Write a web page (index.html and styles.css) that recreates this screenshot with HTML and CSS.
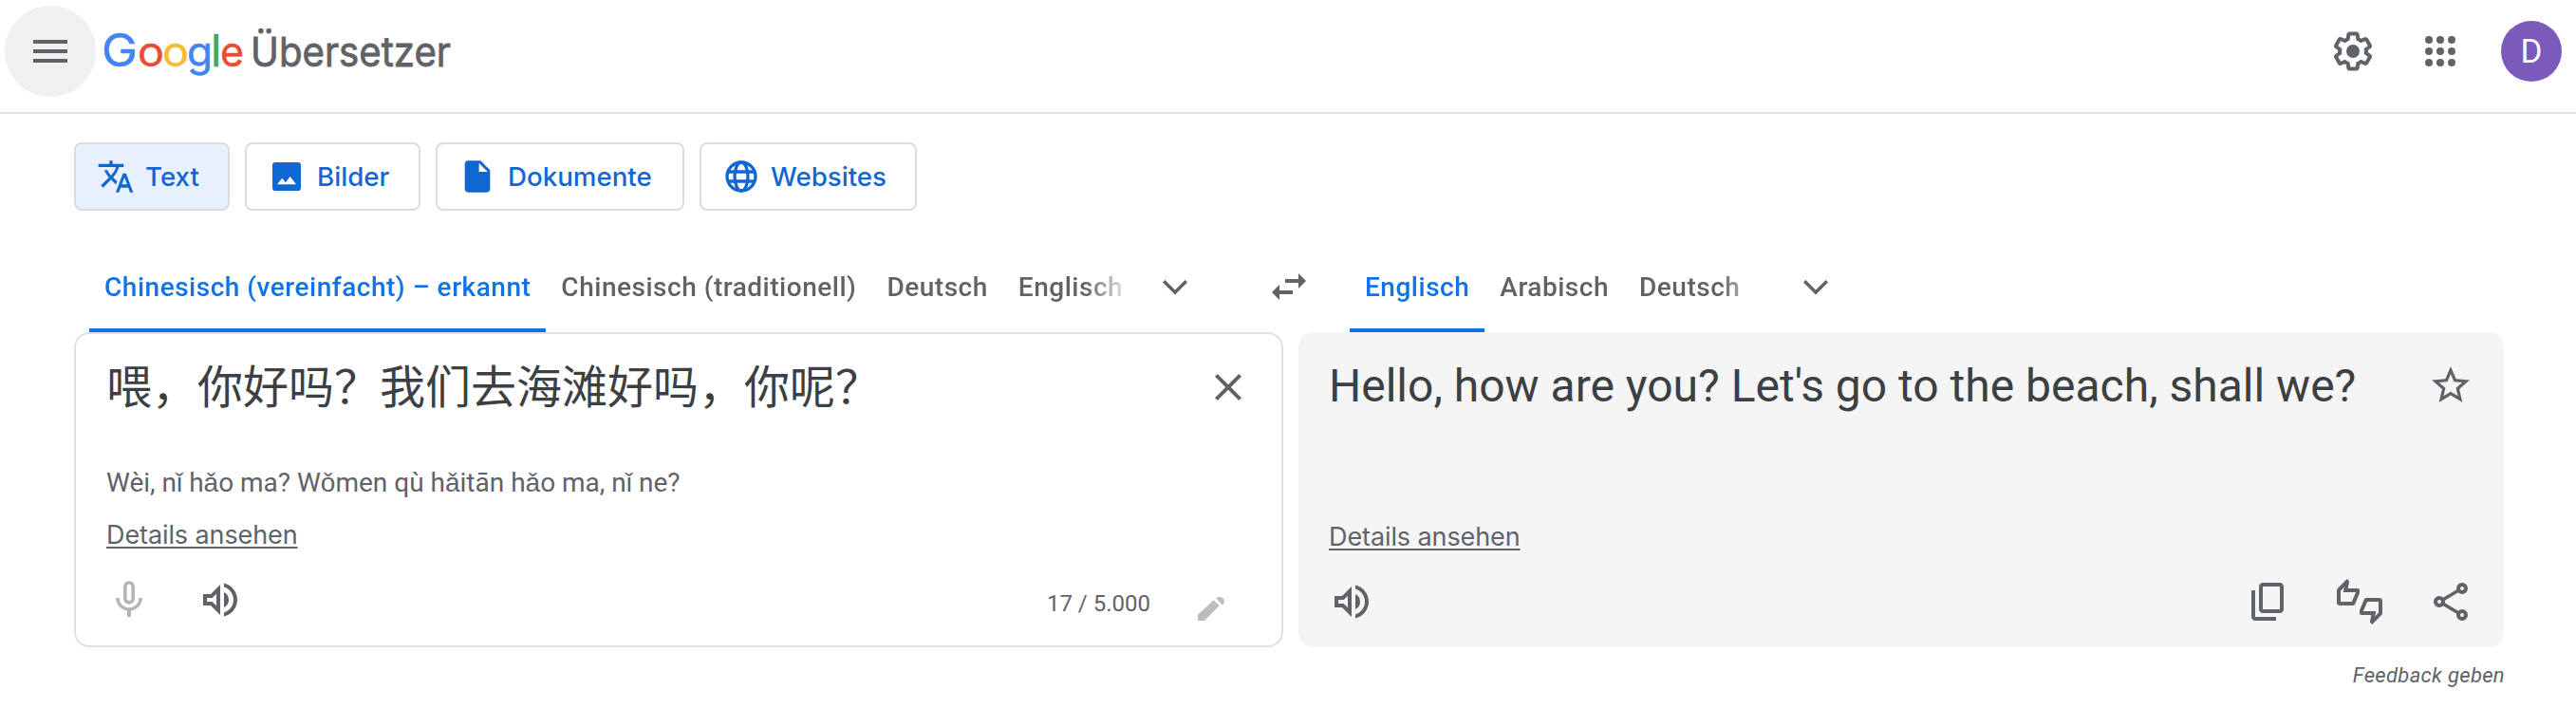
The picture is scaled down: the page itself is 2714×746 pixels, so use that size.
FILE: index.html
```
<!DOCTYPE html>
<html lang="de">
<head>
<meta charset="utf-8">
<title>Google Übersetzer</title>
<link rel="stylesheet" href="styles.css">
</head>
<body>
<header class="header">
  <button class="menu-button" aria-label="Hauptmenü">
    <svg class="icon" viewBox="0 0 24 24"><path d="M3 18h18v-2H3v2zm0-5h18v-2H3v2zm0-7v2h18V6H3z"/></svg>
  </button>
  <svg class="logo" width="380" height="84" viewBox="0 0 380 84">
    <g class="logo-google">
      <text x="1" y="64" font-size="48" textLength="38" lengthAdjust="spacingAndGlyphs" class="g-blue">G</text>
      <text x="39" y="64" textLength="28" lengthAdjust="spacingAndGlyphs" class="g-red">o</text>
      <text x="65" y="64" textLength="28" lengthAdjust="spacingAndGlyphs" class="g-yellow">o</text>
      <text x="91" y="64" textLength="27" lengthAdjust="spacingAndGlyphs" class="g-blue">g</text>
      <text x="116" y="64" font-size="47" class="g-green">l</text>
      <text x="126" y="64" textLength="25" lengthAdjust="spacingAndGlyphs" class="g-red">e</text>
    </g>
    <text x="158" y="64" class="logo-product" textLength="211" lengthAdjust="spacingAndGlyphs">Übersetzer</text>
  </svg>
  <div class="header-actions">
    <svg class="icon" viewBox="0 0 24 24"><path d="M13.85 22.25h-3.7c-.74 0-1.36-.54-1.45-1.27l-.27-1.89c-.27-.14-.53-.29-.79-.46l-1.8.72c-.7.26-1.47-.03-1.81-.65L2.2 15.53c-.35-.66-.2-1.44.36-1.88l1.53-1.19c-.01-.15-.02-.3-.02-.46 0-.15.01-.31.02-.46l-1.52-1.19c-.59-.45-.74-1.26-.37-1.88l1.85-3.19c.34-.62 1.11-.9 1.79-.63l1.81.73c.26-.17.52-.32.78-.46l.27-1.91c.09-.7.71-1.25 1.44-1.25h3.7c.74 0 1.36.54 1.45 1.27l.27 1.89c.27.14.53.29.79.46l1.8-.72c.71-.26 1.48.03 1.82.65l1.84 3.18c.36.66.2 1.44-.36 1.88l-1.52 1.19c.01.15.02.3.02.46s-.01.31-.02.46l1.52 1.19c.56.45.72 1.23.37 1.86l-1.86 3.22c-.34.62-1.11.9-1.8.63l-1.8-.72c-.26.17-.52.32-.78.46l-.27 1.91c-.1.68-.72 1.22-1.46 1.22zm-3.23-2h2.76l.37-2.55.53-.22c.44-.18.88-.44 1.34-.78l.45-.34 2.38.96 1.38-2.4-2.03-1.58.07-.56c.03-.26.06-.51.06-.78s-.03-.53-.06-.78l-.07-.56 2.03-1.58-1.39-2.4-2.39.96-.45-.35c-.42-.32-.87-.58-1.33-.77l-.52-.22-.37-2.55h-2.76l-.37 2.55-.53.21c-.44.19-.88.44-1.34.79l-.45.33-2.38-.95-1.39 2.39 2.03 1.58-.07.56a7 7 0 0 0-.06.79c0 .26.02.53.06.78l.07.56-2.03 1.58 1.38 2.4 2.39-.96.45.35c.43.33.86.58 1.33.77l.53.22.38 2.55z"/><circle cx="12" cy="12" r="3.5"/></svg>
    <svg class="icon" viewBox="0 0 24 24"><circle cx="6" cy="6" r="2"/><circle cx="12" cy="6" r="2"/><circle cx="18" cy="6" r="2"/><circle cx="6" cy="12" r="2"/><circle cx="12" cy="12" r="2"/><circle cx="18" cy="12" r="2"/><circle cx="6" cy="18" r="2"/><circle cx="12" cy="18" r="2"/><circle cx="18" cy="18" r="2"/></svg>
    <span class="avatar">D</span>
  </div>
</header>

<main class="main">
  <nav class="modes">
    <button class="mode mode-text mode-active">
      <svg class="mode-icon" viewBox="0 0 24 24"><path d="M12.87 15.07l-2.54-2.51.03-.03A17.52 17.52 0 0014.07 6H17V4h-7V2H8v2H1v1.99h11.17C11.5 7.92 10.44 9.75 9 11.35 8.07 10.32 7.3 9.19 6.69 8h-2c.73 1.63 1.73 3.17 2.98 4.56l-5.09 5.02L4 19l5-5 3.11 3.11.76-2.04zM18.5 10h-2L12 22h2l1.12-3h4.75L21 22h2l-4.5-12zm-2.62 7l1.62-4.33L19.12 17h-3.24z"/></svg>
      <span>Text</span>
    </button>
    <button class="mode mode-images">
      <svg class="mode-icon" viewBox="0 0 24 24"><path fill-rule="evenodd" d="M5 3h14a2 2 0 0 1 2 2v14a2 2 0 0 1-2 2H5a2 2 0 0 1-2-2V5a2 2 0 0 1 2-2zM6 17h12l-3.8-5-2.9 3.7L9.2 13z"/></svg>
      <span>Bilder</span>
    </button>
    <button class="mode mode-documents">
      <svg class="mode-icon" viewBox="0 0 24 24"><path d="M6 2c-1.1 0-1.99.9-1.99 2L4 20c0 1.1.89 2 1.99 2H18c1.1 0 2-.9 2-2V8l-6-6H6zm7 7V3.5L18.5 9H13z"/></svg>
      <span>Dokumente</span>
    </button>
    <button class="mode mode-websites">
      <svg class="mode-icon line-icon" viewBox="0 0 24 24" stroke-width="2"><circle cx="12" cy="12" r="9"/><ellipse cx="12" cy="12" rx="4.2" ry="9"/><path d="M3.5 9h17M3.5 15h17"/></svg>
      <span>Websites</span>
    </button>
  </nav>

  <div class="languages">
    <div class="lang-list lang-source">
      <button class="lang lang-active">Chinesisch (vereinfacht) – erkannt</button>
      <button class="lang">Chinesisch (traditionell)</button>
      <button class="lang">Deutsch</button>
      <button class="lang">Englisch</button>
    </div>
    <svg class="icon line-icon more-source" viewBox="0 0 24 24" stroke-width="1.7"><path d="M6.1 9.1l5.9 5.9 5.9-5.9"/></svg>
    <svg class="icon swap" viewBox="0 0 24 24"><path d="M6.99 11L3 15l3.99 4v-3H14v-2H6.99v-3zM21 9l-3.99-4v3H10v2h7.01v3L21 9z"/></svg>
    <div class="lang-list lang-target">
      <button class="lang lang-active">Englisch</button>
      <button class="lang">Arabisch</button>
      <button class="lang">Deutsch</button>
    </div>
    <svg class="icon line-icon more-target" viewBox="0 0 24 24" stroke-width="1.7"><path d="M6.1 9.1l5.9 5.9 5.9-5.9"/></svg>
  </div>

  <div class="panels">
    <section class="panel panel-source">
      <div class="panel-top">
        <p class="source-text" lang="zh-CN">喂，你好吗？我们去海滩好吗，你呢？</p>
        <svg class="icon clear" viewBox="0 0 24 24"><path d="M19 6.41L17.59 5 12 10.59 6.41 5 5 6.41 10.59 12 5 17.59 6.41 19 12 13.41 17.59 19 19 17.59 13.41 12z"/></svg>
      </div>
      <p class="translit">Wèi, nǐ hǎo ma? Wǒmen qù hǎitān hǎo ma, nǐ ne?</p>
      <a class="details">Details ansehen</a>
      <div class="toolbar">
        <svg class="icon mic" viewBox="0 0 24 24"><path d="M12 14.2c1.77 0 3-1.3 3-3V5.1a3 3 0 0 0-6 0v6.1c0 1.7 1.23 3 3 3zm-1.2-9.2c0-.66.54-1.2 1.2-1.2s1.2.54 1.2 1.2v6.2c0 .66-.54 1.2-1.2 1.2s-1.2-.54-1.2-1.2zM17.2 11c0 3-2.4 5.1-5.2 5.1S6.8 14 6.8 11H5c0 3.41 2.72 6.23 6 6.72V21h2v-3.28c3.28-.48 6-3.3 6-6.72z"/></svg>
        <svg class="icon" viewBox="0 0 24 24"><path d="M3 9v6h4l5 5V4L7 9H3zm7-.17v6.34L7.83 13H5v-2h2.83L10 8.83zM16.5 12A4.5 4.5 0 0014 7.97v8.05A4.48 4.48 0 0016.5 12zM14 3.23v2.06c2.89.86 5 3.54 5 6.71s-2.11 5.85-5 6.71v2.06c4.01-.91 7-4.49 7-8.77s-2.99-7.86-7-8.77z"/></svg>
        <span class="counter">17 / 5.000</span>
        <svg class="pencil" viewBox="0 0 32 32"><path d="M2 28v-6.2L18.7 6.3l6 6L9 28zM21.3 4.3c2-1.9 4.8-1.9 6.9 0 2 1.9 2.3 4.1.8 6.2-.6.9-1.5.9-2.3.2z"/></svg>
      </div>
    </section>
    <section class="panel panel-target">
      <div class="panel-top">
        <p class="target-text" lang="en">Hello, how are you? Let's go to the beach, shall we?</p>
        <svg class="icon star" viewBox="0 0 24 24"><path d="M22 9.24l-7.19-.62L12 2 9.19 8.63 2 9.24l5.46 4.73L5.82 21 12 17.27 18.18 21l-1.63-7.03L22 9.24zM12 15.4l-3.76 2.27 1-4.28-3.32-2.88 4.38-.38L12 6.1l1.71 4.04 4.38.38-3.32 2.88 1 4.28L12 15.4z"/></svg>
      </div>
      <a class="details">Details ansehen</a>
      <div class="toolbar">
        <svg class="icon listen" viewBox="0 0 24 24"><path d="M3 9v6h4l5 5V4L7 9H3zm7-.17v6.34L7.83 13H5v-2h2.83L10 8.83zM16.5 12A4.5 4.5 0 0014 7.97v8.05A4.48 4.48 0 0016.5 12zM14 3.23v2.06c2.89.86 5 3.54 5 6.71s-2.11 5.85-5 6.71v2.06c4.01-.91 7-4.49 7-8.77s-2.99-7.86-7-8.77z"/></svg>
        <svg class="icon" viewBox="0 0 24 24"><path d="M18 2H9C7.9 2 7 2.9 7 4v12c0 1.1.9 2 2 2h9c1.1 0 2-.9 2-2V4c0-1.1-.9-2-2-2zm0 14H9V4h9v12zM3 6v14c0 1.1.9 2 2 2h11v-2H5V6H3z"/></svg>
        <svg class="icon" viewBox="0 0 24 24"><path d="M12 6c0-.55-.45-1-1-1H5.82l.66-3.18.02-.23c0-.31-.13-.59-.33-.8L5.38 0 .44 4.94C.17 5.21 0 5.59 0 6v6.5c0 .83.67 1.5 1.5 1.5h6.75c.62 0 1.15-.38 1.38-.91l2.26-5.29c.07-.17.11-.36.11-.55V6zm-2 1.13L7.92 12H2V6.21l1.93-1.93L3.36 7H10v.13zM22.5 10h-6.75c-.62 0-1.15.38-1.38.91l-2.26 5.29c-.07.17-.11.36-.11.55V18c0 .55.45 1 1 1h5.18l-.66 3.18-.02.24c0 .31.13.59.33.8l.79.78 4.94-4.94c.27-.27.44-.65.44-1.06v-6.5c0-.83-.67-1.5-1.5-1.5zm-.5 7.79l-1.93 1.93.57-2.72H14v-.13L16.08 12H22v5.79z"/></svg>
        <svg class="icon line-icon" viewBox="0 0 24 24" stroke-width="2"><circle cx="18" cy="5" r="2"/><circle cx="6" cy="12" r="2"/><circle cx="18" cy="19" r="2"/><path stroke-width="1.8" d="M7.8 11l8.4-5M7.8 13l8.4 5"/></svg>
      </div>
    </section>
  </div>
  <p class="feedback">Feedback geben</p>
</main>
</body>
</html>
```
FILE: styles.css
```
* { box-sizing: border-box; }

body {
  margin: 0;
  background: #fff;
  color: #5f6368;
  font-family: Roboto, sans-serif;
  overflow: hidden;
}

p { margin: 0; }

button {
  border: 0;
  padding: 0;
  background: none;
  font: inherit;
  color: inherit;
}

.icon {
  display: block;
  flex: none;
  width: 48px;
  height: 48px;
  fill: #5f6368;
}

.line-icon { fill: none; stroke: #5f6368; }

/* Header */
.header {
  display: flex;
  align-items: flex-start;
  height: 120px;
  padding: 6px 15px 0 5px;
  border-bottom: 2px solid #e0e0e0;
}

.menu-button {
  display: flex;
  align-items: center;
  justify-content: center;
  width: 96px;
  height: 96px;
  border-radius: 50%;
  background: #f0f0f0;
}

.logo {
  display: block;
  margin-left: 5px;
  overflow: visible;
  font-family: Inter, sans-serif;
}

.logo-google { font-size: 43px; stroke-width: .5px; }
.logo-product { font-size: 43px; fill: #5f6368; stroke: #5f6368; stroke-width: .8px; }
.g-blue { fill: #4285f4; stroke: #4285f4; }
.g-red { fill: #e94d35; stroke: #e94d35; }
.g-yellow { fill: #fbbc33; stroke: #fbbc33; }
.g-green { fill: #40a85c; stroke: #40a85c; }

.header-actions {
  display: flex;
  align-items: center;
  gap: 44px;
  height: 96px;
  margin-left: auto;
}

.avatar {
  width: 64px;
  height: 64px;
  margin-left: -4px;
  border-radius: 50%;
  background: #7b5abb;
  color: #fff;
  font-size: 35px;
  line-height: 66px;
  text-align: center;
}

/* Mode buttons */
.main { padding: 30px 76px 0 78px; }

.modes { display: flex; gap: 16px; }

.mode {
  display: flex;
  align-items: center;
  gap: 12px;
  height: 72px;
  padding-left: 22px;
  border: 2px solid #dadce0;
  border-radius: 8px;
  color: #1167d2;
  font: 500 27.7px/40px Inter, sans-serif;
}

.mode-active { background: #e8f0fe; }
.mode-text { width: 164px; gap: 11px; }
.mode-images { width: 185px; }
.mode-documents { width: 262px; }
.mode-websites { width: 229px; gap: 11px; }

.mode-icon { width: 40px; height: 40px; flex: none; fill: #1167d2; }
.mode-icon.line-icon { fill: none; stroke: #1167d2; }

/* Language bar */
.languages {
  display: flex;
  align-items: center;
  height: 96px;
  margin-top: 32px;
  padding-left: 16px;
}

.lang-list { display: flex; flex: none; overflow: hidden; height: 96px; }

.lang-source {
  width: 1106px;
  mask-image: linear-gradient(to right, #000 1048px, transparent 1100px);
}

.lang-target {
  width: 448px;
  mask-image: linear-gradient(to right, #000 390px, transparent 440px);
}

.lang {
  flex: none;
  height: 96px;
  padding: 4px 16px 0;
  border-bottom: 4px solid transparent;
  font-size: 28px;
  font-weight: 500;
  letter-spacing: .52px;
  white-space: nowrap;
}

.lang-active { color: #1173e8; border-bottom-color: #1173e8; }

.more-source { margin-left: 14px; }
.swap { margin: 0 40px 0 72px; }
.more-target { margin-left: 19px; }

/* Panels */
.panels {
  display: grid;
  grid-template-columns: 1274px 1270px;
  gap: 16px;
  height: 332px;
}

.panel {
  display: flex;
  flex-direction: column;
  align-items: flex-start;
  border-radius: 16px;
}

.panel-source { border: 2px solid #e0e0e0; padding: 22px 32px 0; }
.panel-target { background: #f5f5f5; padding: 25px 32px 0; }

.panel-top {
  display: flex;
  justify-content: space-between;
  align-self: stretch;
  height: 64px;
  color: #3c4043;
  font-size: 48px;
  line-height: 64px;
  white-space: nowrap;
}

.source-text { margin-top: -2px; font-family: "Noto Sans CJK SC", sans-serif; }
.clear { margin-top: 10px; }
.star { margin-top: 7px; }

.translit {
  margin-top: 51px;
  font-size: 28px;
  line-height: 40px;
}

.details {
  margin-top: 15px;
  font: 27px/40px Inter, sans-serif;
  letter-spacing: -.1px;
  text-decoration: underline;
  text-decoration-thickness: 2px;
  text-underline-offset: 3px;
}

.panel-target .details { margin-top: 107px; }

.toolbar {
  display: flex;
  align-items: center;
  align-self: stretch;
  gap: 48px;
  height: 48px;
  margin-top: 24px;
}

.mic { fill: #b3b5b7; }

.counter {
  margin: 7px 0 0 auto;
  font-size: 24px;
  line-height: 32px;
}

.pencil {
  width: 32px;
  height: 32px;
  margin: 20px 26px 0 0;
  fill: #bdbdbd;
}

.listen { margin-right: auto; }

.feedback {
  margin-top: 14px;
  margin-right: -1px;
  font-size: 22px;
  font-style: italic;
  line-height: 32px;
  letter-spacing: .33px;
  text-align: right;
}
```
